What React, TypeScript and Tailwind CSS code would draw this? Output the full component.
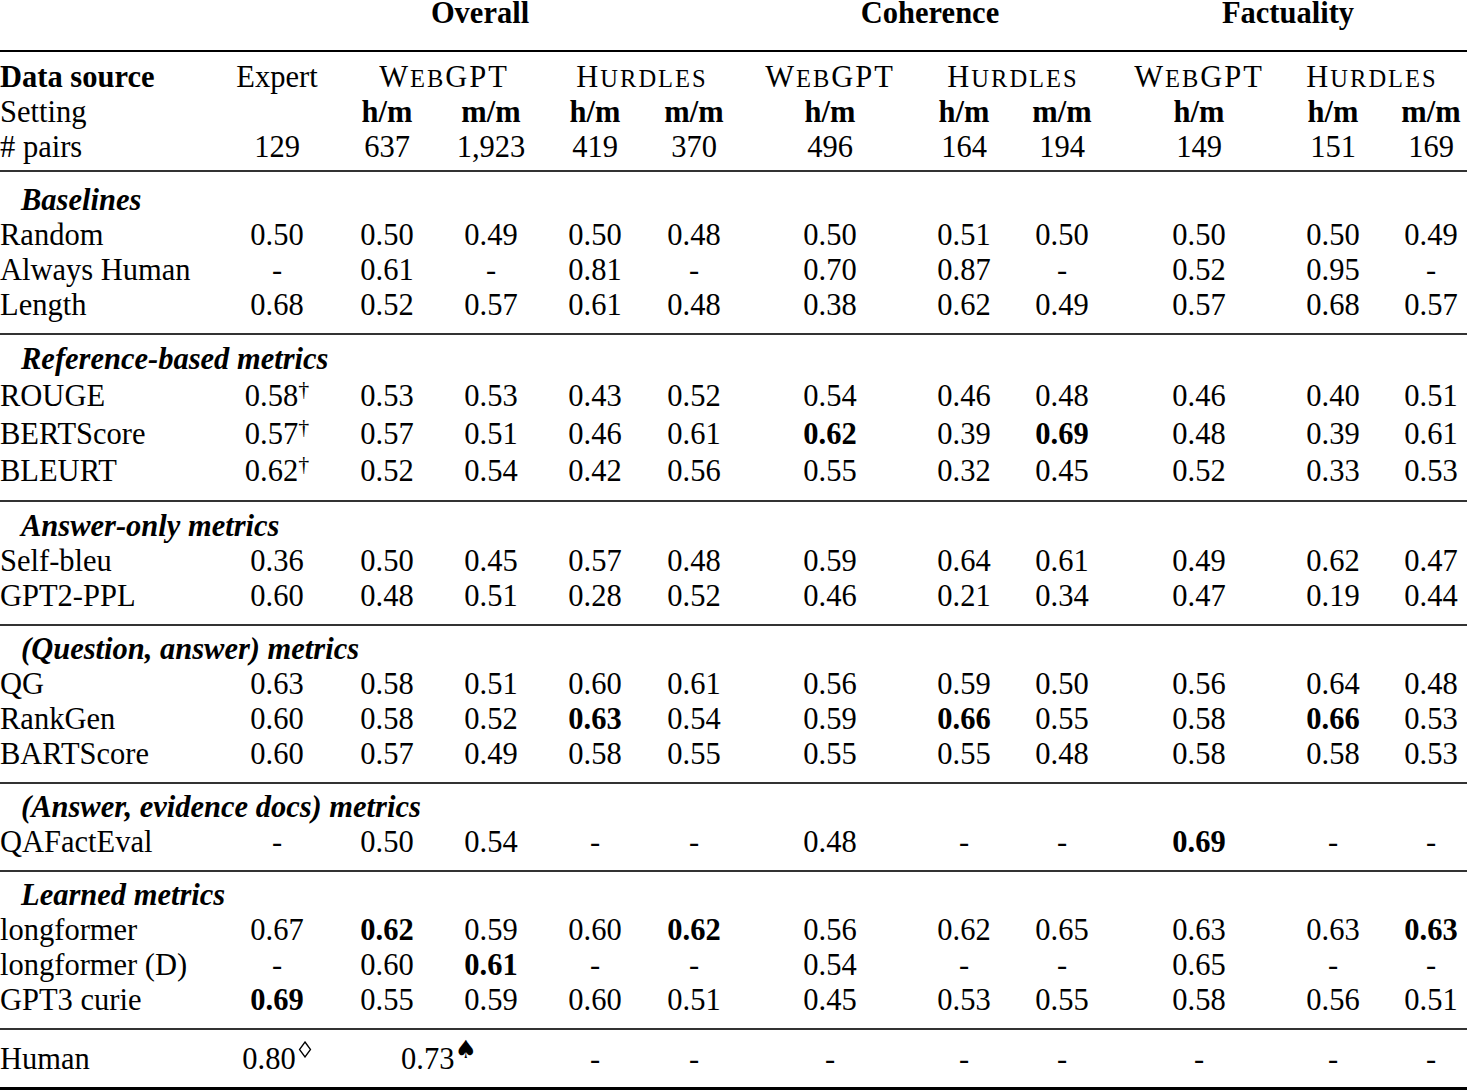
import React from 'react';

const TRACKS =
  'grid grid-cols-[242px_70px_40px_70px_34px_70px_34px_70px_29px_70px_66px_70px_64px_70px_28px_70px_67px_70px_64px_70px_28px_70px]';

// grid column for each of the 11 numeric columns
const START = [
  'col-start-2',
  'col-start-4',
  'col-start-6',
  'col-start-8',
  'col-start-10',
  'col-start-12',
  'col-start-14',
  'col-start-16',
  'col-start-18',
  'col-start-20',
  'col-start-22',
];

type Row = { label: string; values: string[]; tall?: boolean };
type Section = { title: string; rows: Row[]; ruleClass: string };

const sections: Section[] = [
  {
    title: 'Baselines',
    ruleClass: 'mt-[5px] mb-[11.5px]',
    rows: [
      { label: 'Random', values: ['0.50', '0.50', '0.49', '0.50', '0.48', '0.50', '0.51', '0.50', '0.50', '0.50', '0.49'] },
      { label: 'Always Human', values: ['-', '0.61', '-', '0.81', '-', '0.70', '0.87', '-', '0.52', '0.95', '-'] },
      { label: 'Length', values: ['0.68', '0.52', '0.57', '0.61', '0.48', '0.38', '0.62', '0.49', '0.57', '0.68', '0.57'] },
    ],
  },
  {
    title: 'Reference-based metrics',
    ruleClass: 'mt-[10px] mb-[6.5px]',
    rows: [
      { label: 'ROUGE', tall: true, values: ['0.58†', '0.53', '0.53', '0.43', '0.52', '0.54', '0.46', '0.48', '0.46', '0.40', '0.51'] },
      { label: 'BERTScore', tall: true, values: ['0.57†', '0.57', '0.51', '0.46', '0.61', '*0.62', '0.39', '*0.69', '0.48', '0.39', '0.61'] },
      { label: 'BLEURT', tall: true, values: ['0.62†', '0.52', '0.54', '0.42', '0.56', '0.55', '0.32', '0.45', '0.52', '0.33', '0.53'] },
    ],
  },
  {
    title: 'Answer-only metrics',
    ruleClass: 'mt-[10.5px] mb-[7px]',
    rows: [
      { label: 'Self-bleu', values: ['0.36', '0.50', '0.45', '0.57', '0.48', '0.59', '0.64', '0.61', '0.49', '0.62', '0.47'] },
      { label: 'GPT2-PPL', values: ['0.60', '0.48', '0.51', '0.28', '0.52', '0.46', '0.21', '0.34', '0.47', '0.19', '0.44'] },
    ],
  },
  {
    title: '(Question, answer) metrics',
    ruleClass: 'mt-[10px] mb-[6.5px]',
    rows: [
      { label: 'QG', values: ['0.63', '0.58', '0.51', '0.60', '0.61', '0.56', '0.59', '0.50', '0.56', '0.64', '0.48'] },
      { label: 'RankGen', values: ['0.60', '0.58', '0.52', '*0.63', '0.54', '0.59', '*0.66', '0.55', '0.58', '*0.66', '0.53'] },
      { label: 'BARTScore', values: ['0.60', '0.57', '0.49', '0.58', '0.55', '0.55', '0.55', '0.48', '0.58', '0.58', '0.53'] },
    ],
  },
  {
    title: '(Answer, evidence docs) metrics',
    ruleClass: 'mt-[9.5px] mb-[6px]',
    rows: [
      { label: 'QAFactEval', values: ['-', '0.50', '0.54', '-', '-', '0.48', '-', '-', '*0.69', '-', '-'] },
    ],
  },
  {
    title: 'Learned metrics',
    ruleClass: 'mt-[10px] mb-[6.5px]',
    rows: [
      { label: 'longformer', values: ['0.67', '*0.62', '0.59', '0.60', '*0.62', '0.56', '0.62', '0.65', '0.63', '0.63', '*0.63'] },
      { label: 'longformer (D)', values: ['-', '0.60', '*0.61', '-', '-', '0.54', '-', '-', '0.65', '-', '-'] },
      { label: 'GPT3 curie', values: ['*0.69', '0.55', '0.59', '0.60', '0.51', '0.45', '0.53', '0.55', '0.58', '0.56', '0.51'] },
    ],
  },
];

function Value({ v }: { v: string }) {
  const bold = v.startsWith('*');
  const text = bold ? v.slice(1) : v;
  const last = text.slice(-1);
  if (last === '†') {
    return (
      <span>
        {text.slice(0, -1)}
        <span className="relative -top-[10px] text-[22px] leading-none">†</span>
      </span>
    );
  }
  if (last === '♢') {
    return (
      <span>
        {text.slice(0, -1)}
        <svg width="14" height="17" viewBox="0 0 14 17" className="inline relative -top-[13px] ml-[2px]">
          <path d="M7 1 L12.5 8.5 L7 16 L1.5 8.5 Z" fill="none" stroke="black" strokeWidth="1.3" />
        </svg>
      </span>
    );
  }
  if (last === '♠') {
    return (
      <span>
        {text.slice(0, -1)}
        <span className="relative -top-[11px] text-[25px] leading-none font-['DejaVu_Sans',sans-serif]">♠</span>
      </span>
    );
  }
  return <span className={bold ? 'font-bold' : ''}>{text}</span>;
}

function DataRow({ row }: { row: Row }) {
  return (
    <div className={`${TRACKS} h-[35px] leading-[35px] ${row.tall ? 'mt-[2.5px]' : ''}`}>
      <div className="col-start-1 whitespace-nowrap">{row.label}</div>
      {row.values.map((v, i) => (
        <div key={i} className={`${START[i]} flex justify-center whitespace-nowrap`}>
          <Value v={v} />
        </div>
      ))}
    </div>
  );
}

// small caps drawn by hand: first letter full size, rest smaller capitals
function SmallCaps({ first, rest, tail }: { first: string; rest: string; tail?: string }) {
  return (
    <span className="tracking-[2px] whitespace-nowrap">
      {first}
      <span className="text-[24.5px]">{rest}</span>
      {tail}
    </span>
  );
}

export default function App() {
  return (
    <div className="w-[1467px] h-[1090px] overflow-hidden bg-white text-black text-[30.5px] font-['Liberation_Serif','Times_New_Roman',serif]">
      {/* Top group headers */}
      <div className={`${TRACKS} h-[50px] leading-[26px] font-bold`}>
        <div className="col-start-2 col-end-11 flex justify-center pr-[11px]">Overall</div>
        <div className="col-start-12 col-end-17 flex justify-center pr-[32px]">Coherence</div>
        <div className="col-start-18 col-end-23 flex justify-center pr-[54px]">Factuality</div>
      </div>
      <div className="h-[2px] bg-black" />

      {/* Column headers */}
      <div className="pt-[7.5px]">
        <div className={`${TRACKS} h-[35px] leading-[35px]`}>
          <div className="col-start-1 font-bold whitespace-nowrap">Data source</div>
          <div className="col-start-2 flex justify-center">Expert</div>
          <div className="col-start-4 col-end-7 flex justify-center pl-[10px]">
            <SmallCaps first="W" rest="EB" tail="GPT" />
          </div>
          <div className="col-start-8 col-end-11 flex justify-center pr-[5px]">
            <SmallCaps first="H" rest="URDLES" />
          </div>
          <div className="col-start-12 flex justify-center">
            <SmallCaps first="W" rest="EB" tail="GPT" />
          </div>
          <div className="col-start-14 col-end-17 flex justify-center">
            <SmallCaps first="H" rest="URDLES" />
          </div>
          <div className="col-start-18 flex justify-center">
            <SmallCaps first="W" rest="EB" tail="GPT" />
          </div>
          <div className="col-start-20 col-end-23 flex justify-center pr-[20px]">
            <SmallCaps first="H" rest="URDLES" />
          </div>
        </div>
        <div className={`${TRACKS} h-[35px] leading-[35px]`}>
          <div className="col-start-1">Setting</div>
          {['h/m', 'm/m', 'h/m', 'm/m', 'h/m', 'h/m', 'm/m', 'h/m', 'h/m', 'm/m'].map((s, i) => (
            <div key={i} className={`${START[i + 1]} flex justify-center font-bold`}>
              {s}
            </div>
          ))}
        </div>
        <div className={`${TRACKS} h-[35px] leading-[35px]`}>
          <div className="col-start-1"># pairs</div>
          {['129', '637', '1,923', '419', '370', '496', '164', '194', '149', '151', '169'].map((s, i) => (
            <div key={i} className={`${START[i]} flex justify-center whitespace-nowrap`}>
              {s}
            </div>
          ))}
        </div>
      </div>

      {sections.map(sec => (
        <div key={sec.title}>
          <div className={`h-[2px] bg-[#333] ${sec.ruleClass}`} />
          <div className="h-[35px] leading-[35px] pl-[21px] font-bold italic whitespace-nowrap">{sec.title}</div>
          {sec.rows.map(r => (
            <DataRow key={r.label} row={r} />
          ))}
        </div>
      ))}

      {/* Human upper bound */}
      <div className="h-[2px] bg-[#333] mt-[10px] mb-[12px]" />
      <div className={`${TRACKS} h-[35px] leading-[35px]`}>
        <div className="col-start-1">Human</div>
        <div className="col-start-2 flex justify-center whitespace-nowrap">
          <Value v="0.80♢" />
        </div>
        <div className="col-start-4 col-end-7 flex justify-center whitespace-nowrap">
          <Value v="0.73♠" />
        </div>
        {['-', '-', '-', '-', '-', '-', '-', '-'].map((s, i) => (
          <div key={i} className={`${START[i + 3]} flex justify-center`}>
            {s}
          </div>
        ))}
      </div>
      <div className="h-[3px] bg-black mt-[10px]" />
    </div>
  );
}
